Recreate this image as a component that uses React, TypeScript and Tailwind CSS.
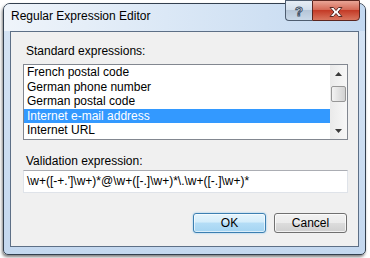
export default function App() {
  const items = [
    "French postal code",
    "German phone number",
    "German postal code",
    "Internet e-mail address",
    "Internet URL",
  ];
  const selected = 3;
  return (
    <div className="w-[370px] h-[258px] bg-white pl-[3px] pt-[3px] font-['Segoe_UI','Liberation_Sans',sans-serif] text-[12px] leading-[15px] text-black">
      <div className="relative w-[363px] h-[252px] rounded-t-[7px] rounded-b-[5px] border border-[#33404f] bg-[linear-gradient(to_bottom,#d6e4f4,#c4d8ef)] px-[6px] pb-[7px] flex flex-col shadow-[-1px_2px_3px_rgba(0,0,0,0.5)]">
        {/* title bar */}
        <div className="h-[27px] -mx-[6px] rounded-t-[6px] bg-[linear-gradient(to_right,#eff4fa,#dbe8f6_45%,#c3d8f0)] pl-[7px] pt-[5px] text-[12px] text-black shrink-0">
          Regular Expression Editor
        </div>
        {/* caption buttons */}
        <div className="absolute right-[5px] top-[-4px] flex h-[21px]">
          <div className="w-[27px] h-[21px] rounded-bl-[4px] border border-r-0 border-[#4e5d70] bg-[linear-gradient(to_bottom,#e6edf5,#d3dfec_45%,#b6c6d8_50%,#c9d8e8)] flex items-center justify-center">
            <span className="text-[13px] font-bold text-white leading-none [-webkit-text-stroke:1px_#43546a] mt-[2px]">?</span>
          </div>
          <div className="w-[48px] h-[21px] rounded-br-[4px] border border-[#5b2620] bg-[linear-gradient(to_bottom,#e9a596,#d56b58_45%,#c43b27_50%,#d9765f)] flex items-center justify-center">
            <svg width="16" height="12" viewBox="0 0 16 12" className="mt-[2px]">
              <path d="M2 1.5 L5.5 1.5 L8 4.5 L10.5 1.5 L14 1.5 L10 6 L14 10.5 L10.5 10.5 L8 7.5 L5.5 10.5 L2 10.5 L6 6 Z" fill="#ffffff" stroke="#5a2a24" strokeWidth="1" strokeLinejoin="round" />
            </svg>
          </div>
        </div>
        {/* client area */}
        <div className="flex-1 border border-[#5d6f86] bg-[#f0f0f0] flex flex-col">
          <div className="mt-[12px] pl-[15px]">Standard expressions:</div>
          <div className="mt-[5px] ml-[12px] w-[325px] h-[76px] border border-[#828790] bg-white flex">
            <div className="flex-1 flex flex-col">
              {items.map((it, i) => (
                <div
                  key={it}
                  className={
                    i === selected
                      ? "h-[14.5px] leading-[14.5px] pl-[3px] bg-[#3399ff] text-white whitespace-nowrap"
                      : "h-[14.5px] leading-[14.5px] pl-[3px] whitespace-nowrap"
                  }
                >
                  {it}
                </div>
              ))}
            </div>
            <div className="w-[17px] h-full bg-[linear-gradient(to_right,#eaeaea,#f7f7f7)] flex flex-col items-center">
              <div className="h-[17px] flex items-center justify-center">
                <svg width="7" height="4" viewBox="0 0 7 4"><path d="M0 4 L3.5 0 L7 4 Z" fill="#3a3a3a" /></svg>
              </div>
              <div className="mt-[4px] w-[15px] h-[16px] rounded-[2px] border border-[#979797] bg-[linear-gradient(to_right,#f3f3f3,#e2e2e2_50%,#d2d2d2)]" />
              <div className="flex-1" />
              <div className="h-[17px] flex items-center justify-center">
                <svg width="7" height="4" viewBox="0 0 7 4"><path d="M0 0 L7 0 L3.5 4 Z" fill="#3a3a3a" /></svg>
              </div>
            </div>
          </div>
          <div className="mt-[14px] pl-[15px]">Validation expression:</div>
          <div className="mt-[1px] ml-[12px] w-[325px] h-[23px] border border-[#dfe3e9] border-t-[#abadb3] bg-white pl-[3px] flex items-center whitespace-nowrap">
            {"\\w+([-+.']\\w+)*@\\w+([-.]\\w+)*\\.\\w+([-.]\\w+)*"}
          </div>
          <div className="mt-[20px] flex justify-end gap-[8px] pr-[11px]">
            <div className="w-[73px] h-[20px] rounded-[3px] border border-[#3c7fb1] bg-[linear-gradient(to_bottom,#e5f4fc,#d4edfb_45%,#b4ddf6_50%,#a4d4f2)] shadow-[inset_0_0_0_1px_rgba(255,255,255,0.6),0_0_2px_#7fc3ee] flex items-center justify-center">
              OK
            </div>
            <div className="w-[73px] h-[20px] rounded-[3px] border border-[#707070] bg-[linear-gradient(to_bottom,#f2f2f2,#ebebeb_50%,#dddddd_50%,#cfcfcf)] shadow-[inset_0_0_0_1px_rgba(255,255,255,0.7)] flex items-center justify-center">
              Cancel
            </div>
          </div>
        </div>
      </div>
    </div>
  );
}
